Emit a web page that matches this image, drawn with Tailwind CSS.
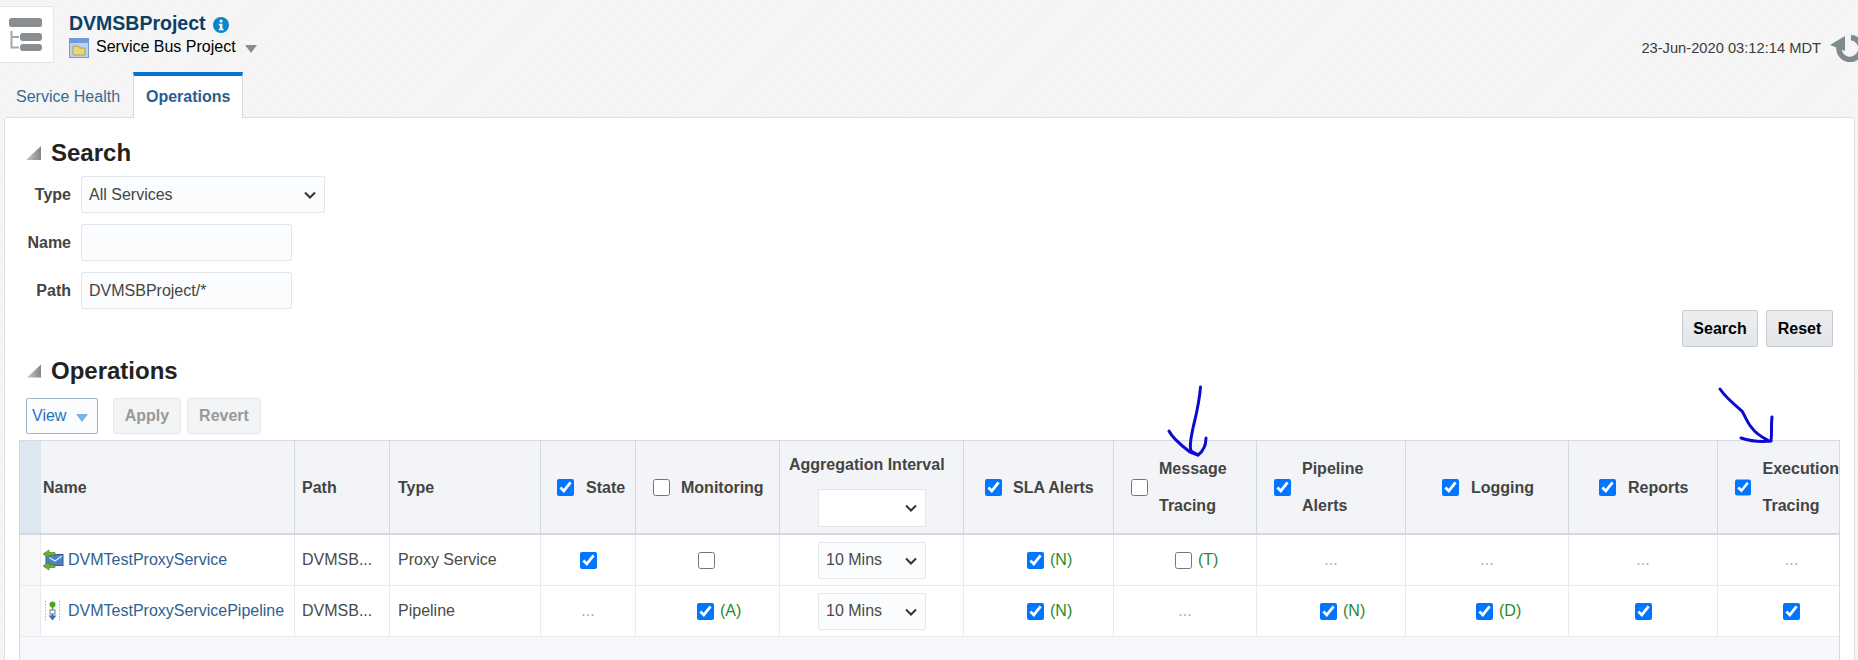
<!DOCTYPE html>
<html lang="en">
<head>
<meta charset="utf-8">
<title>DVMSBProject</title>
<script src="https://cdn.jsdelivr.net/npm/@tailwindcss/browser@4"></script>
</head>
<body class="relative h-[660px] overflow-hidden font-['Liberation_Sans',Arial,sans-serif] text-[16px] text-[#444] bg-[#f5f5f5] bg-[repeating-linear-gradient(135deg,#f6f6f6_0,#f6f6f6_1px,#f4f4f4_1px,#f4f4f4_2px)]">

<!-- top bar -->
<header class="flex h-[72px] pt-[6px]">
  <div class="w-[54px] h-[57px] bg-white border border-l-0 border-[#e6e6e6] rounded-r-[3px] flex items-center justify-center">
    <svg width="54" height="57" viewBox="0 0 54 57" class="shrink-0">
      <rect x="9" y="12" width="33" height="9" rx="2.5" fill="#8b8e91"/>
      <rect x="20" y="27" width="22" height="8" rx="3" fill="#8b8e91"/>
      <rect x="20" y="38" width="22" height="7" rx="3" fill="#8b8e91"/>
      <path d="M11.5 25v16.500H19M11.5 31H19" fill="none" stroke="#a4a7aa" stroke-width="2"/>
    </svg>
  </div>
  <div class="ml-[15px] flex flex-col">
    <div class="flex items-center h-[24px] mt-[6px]">
      <span class="font-bold text-[19.5px] text-[#0d3f66]">DVMSBProject</span>
      <svg width="16" height="16" viewBox="0 0 16 16" class="ml-[7px] mt-[2px]">
        <circle cx="8" cy="8" r="8" fill="#0b86c8"/>
        <rect x="6.800" y="2.800" width="2.600" height="2.600" fill="#fff"/>
        <path d="M5.800 6.700h3.600v5h1.200v1.600H5.800v-1.600h1V8.300H5.800z" fill="#fff"/>
      </svg>
    </div>
    <div class="flex items-center h-[20px] mt-[2px]">
      <svg width="20" height="20" viewBox="0 0 20 20">
        <rect x="0.500" y="0.500" width="19" height="19" fill="#bcd3ee" stroke="#6f9bd6"/>
        <rect x="1" y="1" width="18" height="4" fill="#6f9bd6"/>
        <path d="M4 8h5l1.500 2H16v7H4z" fill="#e9d678" stroke="#a89446" stroke-width="0.800"/>
      </svg>
      <span class="ml-[7px] mb-[2px] text-black">Service Bus Project</span>
      <svg width="12" height="8" viewBox="0 0 12 8" class="ml-[9px] mt-[1px]"><path d="M0 0h12L6 8z" fill="#8a8d90"/></svg>
    </div>
  </div>
  <div class="ml-auto flex items-center h-[26px] mt-[29px] mr-[-8px]">
    <span class="text-[14.7px] text-[#3c3c3c]">23-Jun-2020 03:12:14 MDT</span>
    <svg width="37" height="28" viewBox="0 0 37 28" class="ml-[8px] shrink-0">
      <path d="M10.500 11 A11 11 0 1 0 22 3.500" fill="none" stroke="#7f8b92" stroke-width="5.500"/>
      <path d="M1 11 L16 2 V17z" fill="#7f8b92"/>
    </svg>
  </div>
</header>

<!-- tabs -->
<nav class="flex h-[45px] relative z-10">
  <div class="ml-[16px] w-[117px] flex items-center pt-[5px] text-[#3a6a94]">Service Health</div>
  <div class="w-[110px] h-[46px] bg-white border-t-[4px] border-t-[#0572ce] border-x border-x-[#d9d9d9] flex items-center pl-[12px] pb-[1px] font-bold text-[#2a5d8f]">Operations</div>
</nav>

<!-- main panel -->
<main class="ml-[4px] w-[1851px] h-[550px] bg-white border border-[#dedede] rounded-t-[3px] flex flex-col">

  <section>
    <h2 class="flex items-center h-[32px] mt-[19px] ml-[21px] gap-[10px] text-[24px] font-bold text-[#222]">
      <svg width="15" height="14" viewBox="0 0 15 14"><defs><linearGradient id="tri" x1="0" y1="0" x2="1" y2="0"><stop offset="0" stop-color="#c8c8c8"/><stop offset="1" stop-color="#858585"/></linearGradient></defs><path d="M15 0V14H0z" fill="url(#tri)"/></svg>
      Search
    </h2>
    <form class="mt-[7px] flex flex-col gap-[11px]">
      <label class="flex items-center h-[37px]">
        <span class="w-[66px] text-right font-bold pt-[1px]">Type</span>
        <span class="relative ml-[10px] block">
          <select class="block appearance-none w-[244px] h-[37px] pl-[7px] pt-[1px] bg-[#fbfcfd] border border-[#e2e6ea] rounded-[2px]"><option>All Services</option></select>
          <svg class="absolute right-[9px] top-[15px] pointer-events-none" width="12" height="8" viewBox="0 0 12 8"><path d="M1 1.500l5 5 5-5" fill="none" stroke="#333" stroke-width="2"/></svg>
        </span>
      </label>
      <label class="flex items-center h-[37px]">
        <span class="w-[66px] text-right font-bold">Name</span>
        <input type="text" class="ml-[10px] w-[211px] h-[37px] px-[7px] bg-[#fbfcfd] border border-[#e2e6ea] rounded-[2px]">
      </label>
      <label class="flex items-center h-[37px]">
        <span class="w-[66px] text-right font-bold">Path</span>
        <input type="text" value="DVMSBProject/*" class="ml-[10px] w-[211px] h-[37px] px-[7px] bg-[#fbfcfd] border border-[#e2e6ea] rounded-[2px]">
      </label>
    </form>
    <div class="mt-[1px] flex justify-end gap-[8px] pr-[21px]">
      <button class="w-[76px] h-[37px] font-bold text-black bg-linear-to-b from-[#eceef0] to-[#e3e6e9] border border-[#c8ccd0] rounded-[2px]">Search</button>
      <button class="w-[67px] h-[37px] font-bold text-black bg-linear-to-b from-[#eceef0] to-[#e3e6e9] border border-[#c8ccd0] rounded-[2px]">Reset</button>
    </div>
  </section>

  <section class="flex-1 flex flex-col min-h-0">
    <h2 class="flex items-center h-[32px] mt-[8px] ml-[22px] gap-[10px] text-[24px] font-bold text-[#222]">
      <svg width="14" height="14" viewBox="0 0 15 14"><path d="M15 0V14H0z" fill="url(#tri)"/></svg>
      Operations
    </h2>
    <div class="mt-[11px] ml-[21px] flex h-[36px]">
      <button class="w-[72px] h-[36px] bg-[#fbfcfd] border border-[#9fb2c8] rounded-[2px] flex items-center pl-[5px] text-[#2c72b8]">
        View
        <svg width="12" height="8" viewBox="0 0 12 8" class="ml-[10px] mt-[4px]"><path d="M0 0h12L6 8z" fill="#79b2e6"/></svg>
      </button>
      <button class="ml-[15px] w-[68px] h-[36px] bg-[#f3f4f5] border border-[#e6e8ea] rounded-[2px] font-bold text-[#999]">Apply</button>
      <button class="ml-[6px] w-[74px] h-[36px] bg-[#f3f4f5] border border-[#e6e8ea] rounded-[2px] font-bold text-[#999]">Revert</button>
    </div>

    <div class="mt-[6px] ml-[14px] w-[1821px] flex-1 bg-[#f5f7fa] border-x border-t border-[#d5dbe3]">
      <table class="table-fixed w-[1819px] border-separate border-spacing-0">
        <thead>
          <tr class="h-[94px] text-left font-bold text-[#444]">
            <th class="w-[21px] bg-[#dce7f2] border-b-2 border-[#d5d9de]"></th>
            <th class="w-[254px] bg-[#f2f4f7] border-b-2 border-r border-[#d5d9de] pl-[2px] pt-[2px]">Name</th>
            <th class="w-[95px] bg-[#f2f4f7] border-b-2 border-r border-[#d5d9de] pl-[7px] pt-[2px]">Path</th>
            <th class="w-[151px] bg-[#f2f4f7] border-b-2 border-r border-[#d5d9de] pl-[8px] pt-[2px]">Type</th>
            <th class="w-[95px] bg-[#f2f4f7] border-b-2 border-r border-[#d5d9de] pl-[16px]"><div class="flex items-center gap-[12px]"><input type="checkbox" checked class="w-[17px] h-[17px] accent-[#0075ff]"><span class="pt-[2px]">State</span></div></th>
            <th class="w-[144px] bg-[#f2f4f7] border-b-2 border-r border-[#d5d9de] pl-[17px]"><div class="flex items-center gap-[11px]"><input type="checkbox" class="w-[17px] h-[17px] accent-[#0075ff]"><span class="pt-[2px]">Monitoring</span></div></th>
            <th class="w-[184px] bg-[#f2f4f7] border-b-2 border-r border-[#d5d9de] pl-[9px] pt-[12px] align-top">
              <div class="leading-[24px] whitespace-nowrap">Aggregation Interval</div>
              <div class="relative mt-[12px] ml-[29px] w-[108px]">
                <select class="block appearance-none w-[108px] h-[38px] bg-white border border-[#e4e7ea] rounded-[2px] font-normal"><option></option></select>
                <svg class="absolute right-[9px] top-[15px] pointer-events-none" width="12" height="8" viewBox="0 0 12 8"><path d="M1 1.500l5 5 5-5" fill="none" stroke="#333" stroke-width="2"/></svg>
              </div>
            </th>
            <th class="w-[150px] bg-[#f2f4f7] border-b-2 border-r border-[#d5d9de] pl-[21px]"><div class="flex items-center gap-[11px]"><input type="checkbox" checked class="w-[17px] h-[17px] accent-[#0075ff]"><span class="pt-[2px]">SLA Alerts</span></div></th>
            <th class="w-[143px] bg-[#f2f4f7] border-b-2 border-r border-[#d5d9de] pl-[17px]"><div class="flex items-center gap-[11px]"><input type="checkbox" class="w-[17px] h-[17px] accent-[#0075ff]"><span class="leading-[37px]">Message<br>Tracing</span></div></th>
            <th class="w-[149px] bg-[#f2f4f7] border-b-2 border-r border-[#d5d9de] pl-[17px]"><div class="flex items-center gap-[11px]"><input type="checkbox" checked class="w-[17px] h-[17px] accent-[#0075ff]"><span class="leading-[37px]">Pipeline<br>Alerts</span></div></th>
            <th class="w-[163px] bg-[#f2f4f7] border-b-2 border-r border-[#d5d9de] pl-[36px]"><div class="flex items-center gap-[12px]"><input type="checkbox" checked class="w-[17px] h-[17px] accent-[#0075ff]"><span class="pt-[2px]">Logging</span></div></th>
            <th class="w-[149px] bg-[#f2f4f7] border-b-2 border-r border-[#d5d9de] pl-[30px]"><div class="flex items-center gap-[12px]"><input type="checkbox" checked class="w-[17px] h-[17px] accent-[#0075ff]"><span class="pt-[2px]">Reports</span></div></th>
            <th class="w-[121px] bg-[#f2f4f7] border-b-2 border-[#d5d9de] pl-[17px]"><div class="flex items-center gap-[12px]"><input type="checkbox" checked class="w-[17px] h-[17px] accent-[#0075ff]"><span class="leading-[37px]">Execution<br>Tracing</span></div></th>
          </tr>
        </thead>
        <tbody class="bg-white text-[#4a4a4a]">
          <tr class="h-[51px]">
            <td class="bg-[#f6f7f9] border-b border-r border-[#e8eaed]"></td>
            <td class="border-b border-r border-[#e8eaed] pl-[1px]">
              <div class="flex items-center gap-[4px]">
                <svg width="22" height="22" viewBox="0 0 22 22" class="shrink-0">
                  <rect x="4" y="5.500" width="17" height="11" fill="#4f7fc9" stroke="#2e5a9e"/>
                  <path d="M5 7l8 5 7-5" fill="none" stroke="#dfeaf8" stroke-width="1.400"/>
                  <path d="M1 5l6-4v2.500h6v3H7V9z" fill="#6bae3a" stroke="#3f7a1e" stroke-width="0.600"/>
                  <path d="M1 17l6-4v2.500h6v3H7V21z" fill="#6bae3a" stroke="#3f7a1e" stroke-width="0.600"/>
                </svg>
                <a href="#" class="text-[#2f6190]">DVMTestProxyService</a>
              </div>
            </td>
            <td class="border-b border-r border-[#e8eaed] pl-[7px]">DVMSB...</td>
            <td class="border-b border-r border-[#e8eaed] pl-[8px]">Proxy Service</td>
            <td class="border-b border-r border-[#e8eaed] pl-[39px]"><div class="flex items-center"><input type="checkbox" checked class="w-[17px] h-[17px] accent-[#0075ff]"></div></td>
            <td class="border-b border-r border-[#e8eaed] pl-[62px]"><div class="flex items-center"><input type="checkbox" class="w-[17px] h-[17px] accent-[#0075ff]"></div></td>
            <td class="border-b border-r border-[#e8eaed] pl-[38px]">
              <div class="relative w-[108px]">
                <select class="block appearance-none w-[108px] h-[37px] pl-[7px] bg-[#fbfcfd] border border-[#e4e7ea] rounded-[2px]"><option>10 Mins</option></select>
                <svg class="absolute right-[9px] top-[15px] pointer-events-none" width="12" height="8" viewBox="0 0 12 8"><path d="M1 1.500l5 5 5-5" fill="none" stroke="#333" stroke-width="2"/></svg>
              </div>
            </td>
            <td class="border-b border-r border-[#e8eaed] pl-[63px]"><div class="flex items-center gap-[6px]"><input type="checkbox" checked class="w-[17px] h-[17px] accent-[#0075ff]"><span class="text-[#2a8a2a]">(N)</span></div></td>
            <td class="border-b border-r border-[#e8eaed] pl-[61px]"><div class="flex items-center gap-[6px]"><input type="checkbox" class="w-[17px] h-[17px] accent-[#0075ff]"><span class="text-[#2a8a2a]">(T)</span></div></td>
            <td class="border-b border-r border-[#e8eaed] text-center text-[#aaa]">...</td>
            <td class="border-b border-r border-[#e8eaed] text-center text-[#aaa]">...</td>
            <td class="border-b border-r border-[#e8eaed] text-center text-[#aaa]">...</td>
            <td class="border-b border-[#e8eaed] pl-[26px] text-center text-[#aaa]">...</td>
          </tr>
          <tr class="h-[51px]">
            <td class="bg-[#f6f7f9] border-b border-r border-[#e8eaed]"></td>
            <td class="border-b border-r border-[#e8eaed] pl-[1px]">
              <div class="flex items-center gap-[4px]">
                <svg width="22" height="22" viewBox="0 0 22 22" class="shrink-0">
                  <path d="M3.500 1v20M17.500 1v20" stroke="#c9a9a9" stroke-dasharray="1.500 1.500" fill="none"/>
                  <circle cx="10.500" cy="4.500" r="3" fill="#4ea32c"/>
                  <path d="M10.500 7v3" stroke="#4ea32c" stroke-width="1.500"/>
                  <rect x="8" y="10" width="5" height="4" fill="#fff" stroke="#6a7f9c"/>
                  <path d="M10.500 14v2" stroke="#2e5a9e" stroke-width="1.500"/>
                  <path d="M6.500 15.500h8l-4 5z" fill="#3f6fb5"/>
                </svg>
                <a href="#" class="text-[#2f6190]">DVMTestProxyServicePipeline</a>
              </div>
            </td>
            <td class="border-b border-r border-[#e8eaed] pl-[7px]">DVMSB...</td>
            <td class="border-b border-r border-[#e8eaed] pl-[8px]">Pipeline</td>
            <td class="border-b border-r border-[#e8eaed] text-center text-[#aaa]">...</td>
            <td class="border-b border-r border-[#e8eaed] pl-[61px]"><div class="flex items-center gap-[6px]"><input type="checkbox" checked class="w-[17px] h-[17px] accent-[#0075ff]"><span class="text-[#2a8a2a]">(A)</span></div></td>
            <td class="border-b border-r border-[#e8eaed] pl-[38px]">
              <div class="relative w-[108px]">
                <select class="block appearance-none w-[108px] h-[37px] pl-[7px] bg-[#fbfcfd] border border-[#e4e7ea] rounded-[2px]"><option>10 Mins</option></select>
                <svg class="absolute right-[9px] top-[15px] pointer-events-none" width="12" height="8" viewBox="0 0 12 8"><path d="M1 1.500l5 5 5-5" fill="none" stroke="#333" stroke-width="2"/></svg>
              </div>
            </td>
            <td class="border-b border-r border-[#e8eaed] pl-[63px]"><div class="flex items-center gap-[6px]"><input type="checkbox" checked class="w-[17px] h-[17px] accent-[#0075ff]"><span class="text-[#2a8a2a]">(N)</span></div></td>
            <td class="border-b border-r border-[#e8eaed] text-center text-[#aaa]">...</td>
            <td class="border-b border-r border-[#e8eaed] pl-[63px]"><div class="flex items-center gap-[6px]"><input type="checkbox" checked class="w-[17px] h-[17px] accent-[#0075ff]"><span class="text-[#2a8a2a]">(N)</span></div></td>
            <td class="border-b border-r border-[#e8eaed] pl-[70px]"><div class="flex items-center gap-[6px]"><input type="checkbox" checked class="w-[17px] h-[17px] accent-[#0075ff]"><span class="text-[#2a8a2a]">(D)</span></div></td>
            <td class="border-b border-r border-[#e8eaed] pl-[66px]"><div class="flex items-center"><input type="checkbox" checked class="w-[17px] h-[17px] accent-[#0075ff]"></div></td>
            <td class="border-b border-[#e8eaed] pl-[65px]"><div class="flex items-center"><input type="checkbox" checked class="w-[17px] h-[17px] accent-[#0075ff]"></div></td>
          </tr>
        </tbody>
      </table>
    </div>
  </section>
</main>

<!-- hand-drawn annotations over the page -->
<svg class="absolute left-0 top-0 pointer-events-none" width="1858" height="660" viewBox="0 0 1858 660" fill="none" stroke="#0a0ad0" stroke-width="3" stroke-linecap="round" stroke-linejoin="round">
  <path d="M1200.500 387 C1199 405 1196 415 1193 428 C1191 438 1189 445 1191 451 L1198 455"/>
  <path d="M1169 431 C1172 437 1178 443 1190 452 L1198 455 C1202 452 1206 447 1206 438"/>
  <path d="M1720 389 C1726 398 1735 405 1742 411 C1746 418 1748 424 1752 428 C1756 434 1762 437 1769 441"/>
  <path d="M1772 417 C1771 425 1772 433 1771 441 C1762 442 1750 441 1741 438"/>
</svg>
</body>
</html>
